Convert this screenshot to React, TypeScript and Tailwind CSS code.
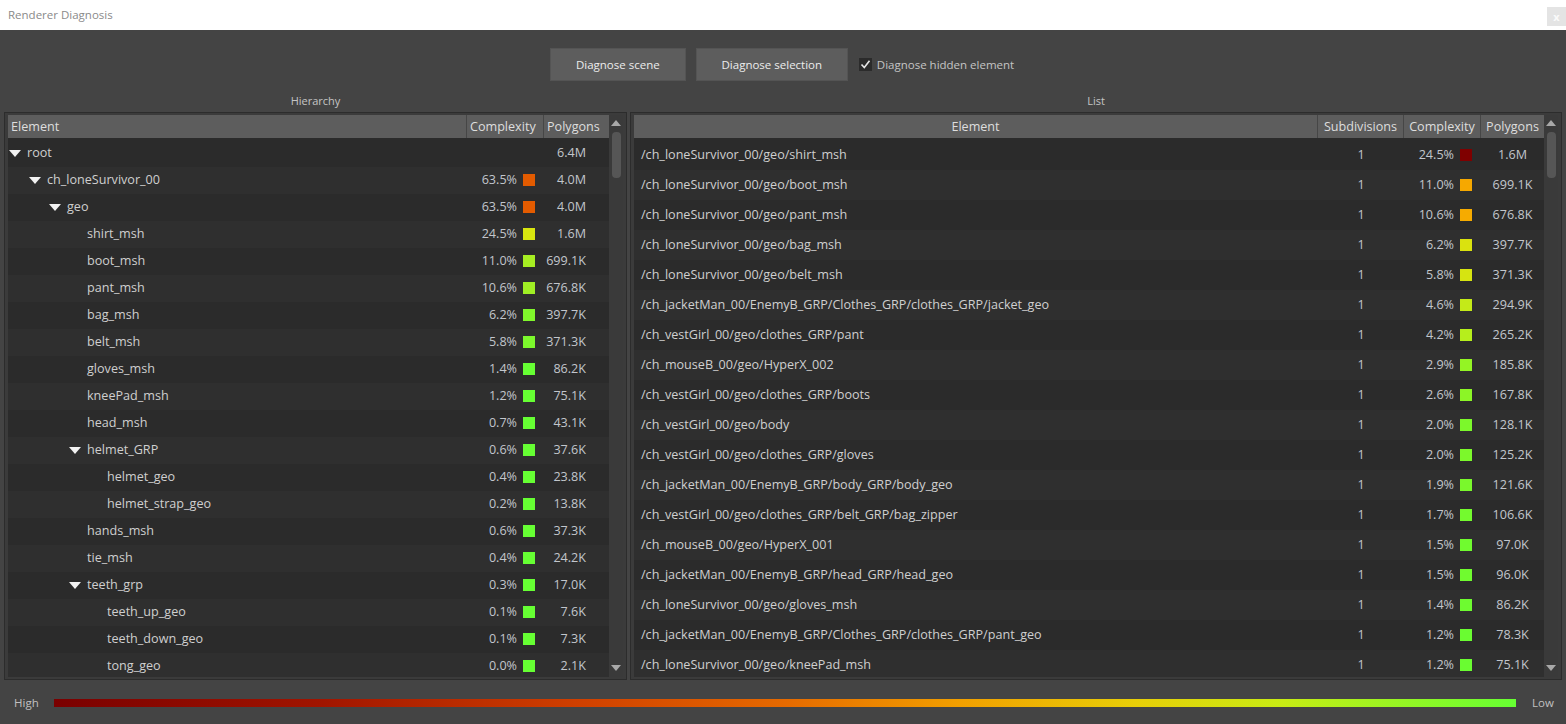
import React from 'react';

type TreeRow = {
    name: string;
    level: number;
    open?: boolean;
    pct?: string;
    color?: string;
    polys: string;
};

type ListRow = {
    path: string;
    pct: string;
    color: string;
    polys: string;
};

const tree: TreeRow[] = [
    { name: 'root', level: 0, open: true, polys: '6.4M' },
    { name: 'ch_loneSurvivor_00', level: 1, open: true, pct: '63.5%', color: '#e35b00', polys: '4.0M' },
    { name: 'geo', level: 2, open: true, pct: '63.5%', color: '#e35b00', polys: '4.0M' },
    { name: 'shirt_msh', level: 3, pct: '24.5%', color: '#d8e60f', polys: '1.6M' },
    { name: 'boot_msh', level: 3, pct: '11.0%', color: '#a6ee22', polys: '699.1K' },
    { name: 'pant_msh', level: 3, pct: '10.6%', color: '#a0ef24', polys: '676.8K' },
    { name: 'bag_msh', level: 3, pct: '6.2%', color: '#80f72b', polys: '397.7K' },
    { name: 'belt_msh', level: 3, pct: '5.8%', color: '#7cf82c', polys: '371.3K' },
    { name: 'gloves_msh', level: 3, pct: '1.4%', color: '#66ff33', polys: '86.2K' },
    { name: 'kneePad_msh', level: 3, pct: '1.2%', color: '#66ff33', polys: '75.1K' },
    { name: 'head_msh', level: 3, pct: '0.7%', color: '#66ff33', polys: '43.1K' },
    { name: 'helmet_GRP', level: 3, open: true, pct: '0.6%', color: '#66ff33', polys: '37.6K' },
    { name: 'helmet_geo', level: 4, pct: '0.4%', color: '#66ff33', polys: '23.8K' },
    { name: 'helmet_strap_geo', level: 4, pct: '0.2%', color: '#66ff33', polys: '13.8K' },
    { name: 'hands_msh', level: 3, pct: '0.6%', color: '#66ff33', polys: '37.3K' },
    { name: 'tie_msh', level: 3, pct: '0.4%', color: '#66ff33', polys: '24.2K' },
    { name: 'teeth_grp', level: 3, open: true, pct: '0.3%', color: '#66ff33', polys: '17.0K' },
    { name: 'teeth_up_geo', level: 4, pct: '0.1%', color: '#66ff33', polys: '7.6K' },
    { name: 'teeth_down_geo', level: 4, pct: '0.1%', color: '#66ff33', polys: '7.3K' },
    { name: 'tong_geo', level: 4, pct: '0.0%', color: '#66ff33', polys: '2.1K' },
];

const list: ListRow[] = [
    { path: '/ch_loneSurvivor_00/geo/shirt_msh', pct: '24.5%', color: '#7f0000', polys: '1.6M' },
    { path: '/ch_loneSurvivor_00/geo/boot_msh', pct: '11.0%', color: '#f6a800', polys: '699.1K' },
    { path: '/ch_loneSurvivor_00/geo/pant_msh', pct: '10.6%', color: '#f6ab00', polys: '676.8K' },
    { path: '/ch_loneSurvivor_00/geo/bag_msh', pct: '6.2%', color: '#dae20f', polys: '397.7K' },
    { path: '/ch_loneSurvivor_00/geo/belt_msh', pct: '5.8%', color: '#d6e411', polys: '371.3K' },
    { path: '/ch_jacketMan_00/EnemyB_GRP/Clothes_GRP/clothes_GRP/jacket_geo', pct: '4.6%', color: '#c4ea18', polys: '294.9K' },
    { path: '/ch_vestGirl_00/geo/clothes_GRP/pant', pct: '4.2%', color: '#b6ee1c', polys: '265.2K' },
    { path: '/ch_mouseB_00/geo/HyperX_002', pct: '2.9%', color: '#94f424', polys: '185.8K' },
    { path: '/ch_vestGirl_00/geo/clothes_GRP/boots', pct: '2.6%', color: '#8cf526', polys: '167.8K' },
    { path: '/ch_vestGirl_00/geo/body', pct: '2.0%', color: '#7cf82b', polys: '128.1K' },
    { path: '/ch_vestGirl_00/geo/clothes_GRP/gloves', pct: '2.0%', color: '#7cf82b', polys: '125.2K' },
    { path: '/ch_jacketMan_00/EnemyB_GRP/body_GRP/body_geo', pct: '1.9%', color: '#7af82c', polys: '121.6K' },
    { path: '/ch_vestGirl_00/geo/clothes_GRP/belt_GRP/bag_zipper', pct: '1.7%', color: '#74fa2e', polys: '106.6K' },
    { path: '/ch_mouseB_00/geo/HyperX_001', pct: '1.5%', color: '#70fb2f', polys: '97.0K' },
    { path: '/ch_jacketMan_00/EnemyB_GRP/head_GRP/head_geo', pct: '1.5%', color: '#70fb2f', polys: '96.0K' },
    { path: '/ch_loneSurvivor_00/geo/gloves_msh', pct: '1.4%', color: '#6efb30', polys: '86.2K' },
    { path: '/ch_jacketMan_00/EnemyB_GRP/Clothes_GRP/clothes_GRP/pant_geo', pct: '1.2%', color: '#6afc31', polys: '78.3K' },
    { path: '/ch_loneSurvivor_00/geo/kneePad_msh', pct: '1.2%', color: '#6afc31', polys: '75.1K' },
];

const Triangle = () => (
    <svg width="12" height="7" viewBox="0 0 12 7" className="shrink-0">
        <polygon points="0,0 12,0 6,7" fill="#f2f2f2" />
    </svg>
);

const Swatch = ({ color }: { color: string }) => (
    <span className="ml-[6px] inline-block h-[12px] w-[12px] shrink-0" style={{ backgroundColor: color }} />
);

const Scrollbar = () => (
    <div className="flex w-[14px] shrink-0 flex-col items-center bg-[#3a3a3a]">
        <svg width="10" height="6" viewBox="0 0 10 6" className="mt-[5px]">
            <polygon points="0,6 10,6 5,0" fill="#a8a8a8" />
        </svg>
        <div className="mt-[6px] h-[46px] w-[9px] rounded-[4px] bg-[#565656]" />
        <div className="flex-1" />
        <svg width="10" height="6" viewBox="0 0 10 6" className="mb-[6px]">
            <polygon points="0,0 10,0 5,6" fill="#a8a8a8" />
        </svg>
    </div>
);

const HeaderCell = ({ label, className }: { label: string; className: string }) => (
    <div className={`flex h-full items-center border-r border-[#464646] pt-[1px] text-[12.6px] text-[#dedede] ${className}`}>
        {label}
    </div>
);

const HierarchyPanel = () => (
    <div className="flex w-[623px] shrink-0 flex-col">
        <div className="h-[17px] text-center text-[11px] leading-[11px] text-[#c4c4c4]">Hierarchy</div>
        <div className="flex h-[568px] border border-[#2c2c2c] bg-[#3b3b3b] px-[3px] pb-[2px] pt-[2px]">
            <div className="flex min-w-0 flex-1 flex-col overflow-hidden">
                <div className="flex h-[23px] shrink-0 bg-[#5d5d5d]">
                    <HeaderCell label="Element" className="flex-1 pl-[3px]" />
                    <HeaderCell label="Complexity" className="w-[77px] pl-[3px]" />
                    <HeaderCell label="Polygons" className="w-[65px] border-r-0 pl-[3px]" />
                </div>
                <div className="flex-1 overflow-hidden bg-[#2b2b2b] pt-[2px]">
                    {tree.map((row, i) => (
                        <div
                            key={row.name}
                            className={`flex h-[27px] items-center text-[12.6px] text-[#cfcfcf] ${i % 2 === 0 ? 'bg-[#2b2b2b]' : 'bg-[#2f2f2f]'}`}
                        >
                            <div className="flex flex-1 items-center" style={{ paddingLeft: 1 + row.level * 20 }}>
                                <span className="flex w-[18px] shrink-0 items-center">{row.open && <Triangle />}</span>
                                <span>{row.name}</span>
                            </div>
                            <div className="flex w-[77px] items-center justify-end pr-[9px] text-[#c2c6cc]">
                                {row.pct && (
                                    <>
                                        <span>{row.pct}</span>
                                        <Swatch color={row.color!} />
                                    </>
                                )}
                            </div>
                            <div className="w-[65px] pr-[23px] text-right text-[#c2c6cc]">{row.polys}</div>
                        </div>
                    ))}
                </div>
            </div>
            <Scrollbar />
        </div>
    </div>
);

const ListPanel = () => (
    <div className="flex min-w-0 flex-1 flex-col">
        <div className="h-[17px] text-center text-[11px] leading-[11px] text-[#c4c4c4]">List</div>
        <div className="flex h-[568px] border border-[#2c2c2c] bg-[#3b3b3b] px-[3px] pb-[2px] pt-[2px]">
            <div className="flex min-w-0 flex-1 flex-col overflow-hidden">
                <div className="flex h-[23px] shrink-0 bg-[#5d5d5d]">
                    <HeaderCell label="Element" className="flex-1 justify-center" />
                    <HeaderCell label="Subdivisions" className="w-[86px] justify-center" />
                    <HeaderCell label="Complexity" className="w-[77px] justify-center" />
                    <HeaderCell label="Polygons" className="w-[63px] justify-center border-r-0" />
                </div>
                <div className="flex-1 overflow-hidden bg-[#2b2b2b] pt-[2px]">
                    {list.map((row, i) => (
                        <div
                            key={row.path}
                            className={`flex h-[30px] shrink-0 items-center text-[12.6px] text-[#cfcfcf] ${i % 2 === 0 ? 'bg-[#2b2b2b]' : 'bg-[#2f2f2f]'}`}
                        >
                            <div className="min-w-0 flex-1 truncate pl-[7px]">{row.path}</div>
                            <div className="w-[86px] text-center text-[#c2c6cc]">1</div>
                            <div className="flex w-[77px] items-center justify-end pr-[9px] text-[#c2c6cc]">
                                <span>{row.pct}</span>
                                <Swatch color={row.color} />
                            </div>
                            <div className="w-[63px] text-center text-[#c2c6cc]">{row.polys}</div>
                        </div>
                    ))}
                </div>
            </div>
            <Scrollbar />
        </div>
    </div>
);

export default function App() {
    return (
        <div className="flex h-[724px] w-[1566px] flex-col overflow-hidden bg-[#444444] font-['Open_Sans','Liberation_Sans',sans-serif]">
            {/* title bar */}
            <div className="flex h-[30px] shrink-0 items-start bg-white">
                <span className="pl-[8px] pt-[6px] text-[11.5px] text-[#8a8a8a]">Renderer Diagnosis</span>
                <div className="flex-1" />
                <div className="mt-[7px] flex h-[19px] w-[19px] items-center justify-center bg-[#e4e4e4] text-[11px] font-bold leading-none text-[#fafafa]">
                    x
                </div>
            </div>

            {/* toolbar */}
            <div className="flex shrink-0 items-center justify-center pr-[2px] pt-[18px]">
                <button className="h-[33px] w-[136px] border border-[#545454] bg-[#5d5d5d] text-[11.5px] text-[#ececec]">
                    Diagnose scene
                </button>
                <button className="ml-[10px] h-[33px] w-[152px] border border-[#545454] bg-[#5d5d5d] text-[11.5px] text-[#ececec]">
                    Diagnose selection
                </button>
                <span className="ml-[11px] flex h-[13px] w-[13px] items-center justify-center bg-[#2b2b2b]">
                    <svg width="11" height="11" viewBox="0 0 11 11">
                        <polyline points="1.5,5.5 4.3,8.5 9.5,1.8" fill="none" stroke="#e6e6e6" strokeWidth="1.6" />
                    </svg>
                </span>
                <span className="ml-[5px] text-[11.5px] text-[#c4c4c4]">Diagnose hidden element</span>
            </div>

            {/* panels */}
            <div className="mt-[14px] flex shrink-0 gap-[3px] px-[4px]">
                <HierarchyPanel />
                <ListPanel />
            </div>

            {/* legend */}
            <div className="flex flex-1 items-center pt-[2px] text-[11.5px] text-[#c0c0c0]">
                <span className="w-[54px] pl-[14px]">High</span>
                <div className="h-[8px] flex-1 bg-[linear-gradient(to_right,#7a0000_0%,#a01400_18%,#d04000_36%,#e66a00_50%,#f2a000_62%,#e8cf08_74%,#c8ec14_84%,#66ff33_100%)]" />
                <span className="w-[50px] pl-[16px]">Low</span>
            </div>
        </div>
    );
}
